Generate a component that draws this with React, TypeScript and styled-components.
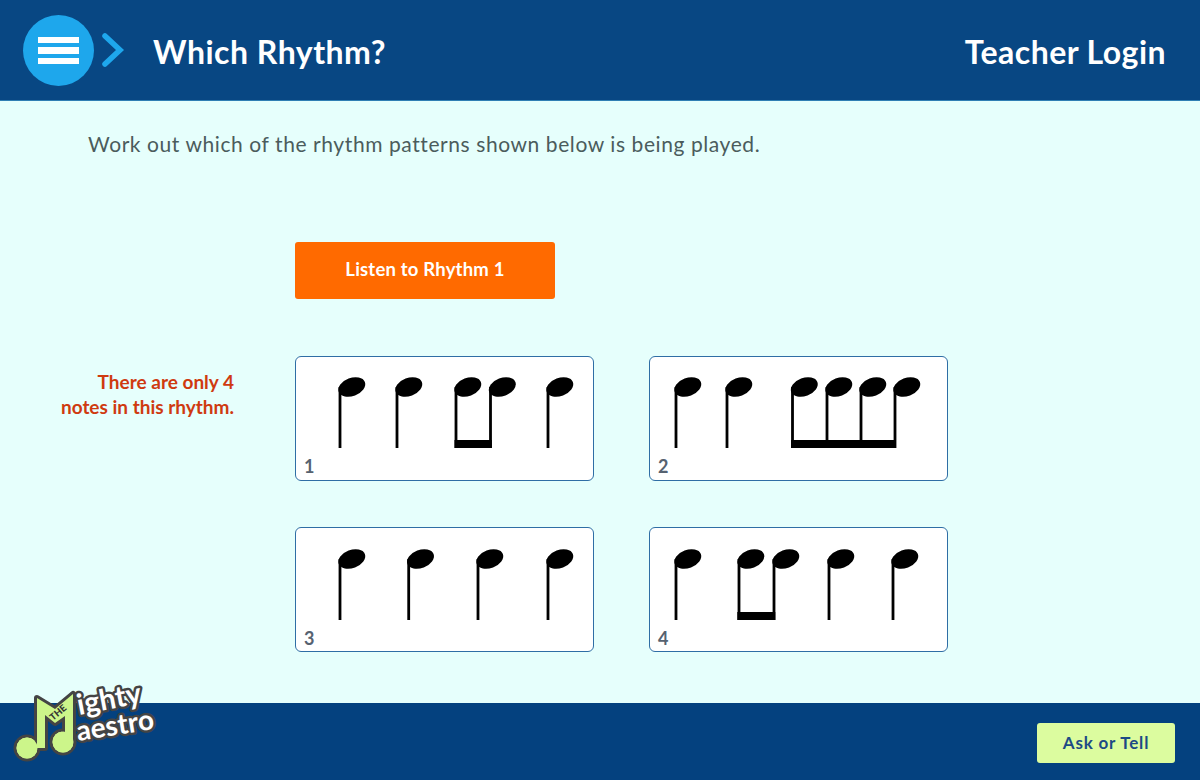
import React from "react";
import styled, { createGlobalStyle } from "styled-components";

const Global = createGlobalStyle`
  html, body { margin: 0; padding: 0; background: #e6fffc; }
  body { font-family: "Lato", "Noto Sans", sans-serif; }
  * { box-sizing: border-box; }
`;

const Page = styled.div`
  position: relative;
  width: 1200px;
  height: 780px;
  display: flex;
  flex-direction: column;
  overflow: hidden;
  background: #e6fffc;
`;

const Header = styled.header`
  flex: 0 0 101px;
  display: flex;
  align-items: center;
  padding: 0 34px 0 23px;
  background: #084783;
  border-bottom: 1px solid #2f7fb4;
`;

const MenuButton = styled.button`
  width: 71px;
  height: 71px;
  margin-top: 1px;
  border: 0;
  border-radius: 50%;
  padding: 0;
  background: #1ea7ec;
  display: flex;
  flex-direction: column;
  align-items: center;
  justify-content: center;
  gap: 4px;
`;

const MenuBar = styled.span`
  display: block;
  width: 41px;
  height: 6.5px;
  background: #fff;
`;

const Chevron = styled.svg`
  width: 24px;
  height: 34px;
  margin-left: 7px;
  flex: none;
`;

const Title = styled.h1`
  margin: 3px 0 0 28px;
  font-size: 32px;
  font-weight: 700;
  color: #fff;
  letter-spacing: 0.5px;
`;

const Login = styled.a`
  margin: 3px 0 0 auto;
  font-size: 32px;
  font-weight: 700;
  color: #fff;
  letter-spacing: 0.45px;
`;

const Main = styled.main`
  flex: 1;
  display: flex;
  flex-direction: column;
  padding-top: 29px;
`;

const Intro = styled.p`
  margin: 0 0 0 88px;
  font-size: 21px;
  line-height: 27px;
  color: #4b5c5c;
  letter-spacing: 0.58px;
`;

const Listen = styled.button`
  width: 260px;
  height: 57px;
  margin: 85px 0 0 295px;
  padding-bottom: 4px;
  border: 0;
  border-radius: 3px;
  background: #ff6a00;
  color: #fff;
  font-family: inherit;
  font-size: 18.5px;
  font-weight: 700;
  letter-spacing: 0.2px;
`;

const Exercise = styled.section`
  display: grid;
  grid-template-columns: 234px 299px 299px;
  grid-template-rows: 125px 125px;
  column-gap: 61px;
  row-gap: 46px;
  margin-top: 57px;
`;

const Hint = styled.p`
  grid-column: 1;
  grid-row: 1;
  margin: 13px 0 0 0;
  text-align: right;
  font-size: 19px;
  line-height: 25px;
  font-weight: 700;
  color: #cf3a10;
`;

const Card = styled.div<{ $second?: boolean }>`
  grid-column: ${(p) => (p.$second ? 3 : 2)};
  background: #fff;
  border: 1px solid #2f6ea5;
  border-radius: 6px;
  display: flex;
  flex-direction: column;
  margin-left: ${(p) => (p.$second ? "-6px" : "0")};
  width: 299px;
`;

const Staff = styled.svg<{ $lower?: boolean }>`
  display: block;
  width: 297px;
  height: 97px;
  flex: none;
  margin-top: ${(p) => (p.$lower ? "1px" : "0")};
`;

const CardNumber = styled.span`
  margin: 2px 0 0 8px;
  font-size: 18px;
  line-height: 20px;
  font-weight: 700;
  color: #566270;
`;

const Footer = styled.footer`
  flex: 0 0 77px;
  display: flex;
  align-items: center;
  justify-content: flex-end;
  padding: 3px 25px 0 0;
  background: #04417f;
`;

const AskButton = styled.button`
  width: 138px;
  height: 40px;
  border: 0;
  border-radius: 3px;
  background: #dcfc9f;
  color: #1c4a85;
  font-family: inherit;
  font-size: 17px;
  font-weight: 700;
  letter-spacing: 0.8px;
  padding-bottom: 2px;
`;

const Logo = styled.svg`
  position: absolute;
  left: 0;
  top: 680px;
  width: 180px;
  height: 100px;
  font-family: "Lato", sans-serif;
`;

type NoteGroup = { stems: number[]; beam?: [number, number]; lower?: boolean };

function Notes({ stems, beam, lower }: NoteGroup) {
  return (
    <Staff viewBox="0 0 297 97" $lower={lower}>
      {stems.map((x) => (
        <g key={x}>
          <rect x={x - 1.4} y={30} width={2.8} height={61} fill="#000" />
          <ellipse cx={x + 11.8} cy={30} rx={14} ry={9} fill="#000" transform={`rotate(-21 ${x + 11.8} 30)`} />
        </g>
      ))}
      {beam && <rect x={beam[0]} y={83} width={beam[1] - beam[0]} height={8} fill="#000" />}
    </Staff>
  );
}

const cards: { n: number; second: boolean; lower: boolean; stems: number[]; beam?: [number, number] }[] = [
  { n: 1, second: false, lower: false, stems: [44, 101, 160, 194.5, 252], beam: [158.5, 195.8] },
  { n: 2, second: true, lower: false, stems: [26, 77, 142.5, 177, 211, 245], beam: [141, 246] },
  { n: 3, second: false, lower: true, stems: [44, 112.7, 182, 252] },
  { n: 4, second: true, lower: true, stems: [26, 89, 124, 179, 243], beam: [87.3, 125.3] },
];

export default function App() {
  return (
    <Page>
      <Global />
      <Header>
        <MenuButton aria-label="Menu">
          <MenuBar />
          <MenuBar />
          <MenuBar />
        </MenuButton>
        <Chevron viewBox="0 0 24 34">
          <path d="M4 3 L19 17 L4 31" fill="none" stroke="#1ea7ec" strokeWidth="5.5" strokeLinecap="round" strokeLinejoin="miter" />
        </Chevron>
        <Title>Which Rhythm?</Title>
        <Login>Teacher Login</Login>
      </Header>
      <Main>
        <Intro>Work out which of the rhythm patterns shown below is being played.</Intro>
        <Listen>Listen to Rhythm 1</Listen>
        <Exercise>
          <Hint>
            There are only 4
            <br />
            notes in this rhythm.
          </Hint>
          {cards.map((c) => (
            <Card key={c.n} $second={c.second}>
              <Notes stems={c.stems} beam={c.beam} lower={c.lower} />
              <CardNumber>{c.n}</CardNumber>
            </Card>
          ))}
        </Exercise>
      </Main>
      <Footer>
        <AskButton>Ask or Tell</AskButton>
      </Footer>
      <Logo viewBox="0 0 180 100">
        <g stroke="#444" strokeWidth="6" strokeLinejoin="round" fill="#ccf58a" paintOrder="stroke">
          <circle cx="27" cy="68" r="10.5" />
          <circle cx="63" cy="62" r="10.5" />
          <path d="M37 18 L55 29 L73 14 L73 62 L65 62 L65 36 L55 43 L45 35 L45 68 L37 68 Z" />
        </g>
        <circle cx="27" cy="68" r="10.5" fill="#ccf58a" />
        <circle cx="63" cy="62" r="10.5" fill="#ccf58a" />
        <text x="53" y="41" fontSize="9.5" fontWeight="900" fill="#333" transform="rotate(-40 53 41)">THE</text>
        <g fontWeight="700" fill="#fff" stroke="#444" strokeWidth="5" strokeLinejoin="round" paintOrder="stroke">
          <text x="79" y="35" fontSize="29" transform="rotate(-11 79 35)">ighty</text>
          <text x="78" y="61" fontSize="28" transform="rotate(-9 78 61)">aestro</text>
        </g>
      </Logo>
    </Page>
  );
}
